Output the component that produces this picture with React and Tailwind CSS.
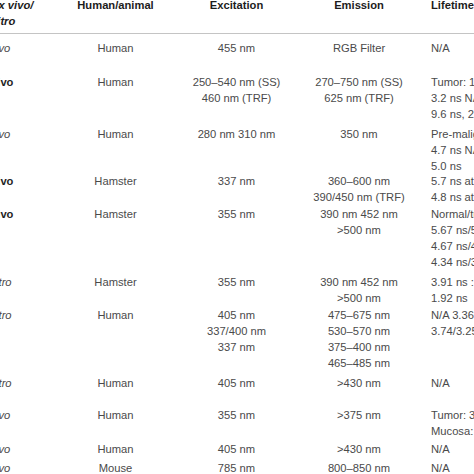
import React from "react";

// columns: study type | species | excitation | emission | lifetime
const cols = "grid grid-cols-[80px_115px_127px_118px_1fr]";

const rows = [
  { h: "h-[34px]", c1: "In vivo", s1: "italic", animal: "Human", exc: ["455 nm"], em: ["RGB Filter"], life: ["N/A"] },
  {
    h: "h-[52px]",
    c1: "In vivo",
    s1: "font-bold text-[#1f1f1f]",
    animal: "Human",
    exc: ["250–540 nm (SS)", "460 nm (TRF)"],
    em: ["270–750 nm (SS)", "625 nm (TRF)"],
    life: ["Tumor: 1.8 ns", "3.2 ns NADH", "9.6 ns, 2.4 ns"],
  },
  {
    h: "h-[47px]",
    c1: "In vivo",
    s1: "italic",
    animal: "Human",
    exc: ["280 nm 310 nm"],
    em: ["350 nm"],
    life: ["Pre-malignant", "4.7 ns NADH", "5.0 ns"],
  },
  {
    h: "h-[33px]",
    c1: "In vivo",
    s1: "font-bold text-[#1f1f1f]",
    animal: "Hamster",
    exc: ["337 nm"],
    em: ["360–600 nm", "390/450 nm (TRF)"],
    life: ["5.7 ns at 390 nm", "4.8 ns at 450 nm"],
  },
  {
    h: "h-[68px]",
    c1: "In vivo",
    s1: "font-bold text-[#1f1f1f]",
    animal: "Hamster",
    exc: ["355 nm"],
    em: ["390 nm 452 nm", ">500 nm"],
    life: ["Normal/tumor", "5.67 ns/5.1 ns", "4.67 ns/4.2 ns", "4.34 ns/3.9 ns"],
  },
  {
    h: "h-[33px]",
    c1: "In vitro",
    s1: "italic",
    animal: "Hamster",
    exc: ["355 nm"],
    em: ["390 nm 452 nm", ">500 nm"],
    life: ["3.91 ns : 2.1 ns", "1.92 ns"],
  },
  {
    h: "h-[68px]",
    c1: "In vitro",
    s1: "italic",
    animal: "Human",
    exc: ["405 nm", "337/400 nm", "337 nm"],
    em: ["475–675 nm", "530–570 nm", "375–400 nm", "465–485 nm"],
    life: ["N/A 3.36 ns", "3.74/3.25 ns"],
  },
  { h: "h-[32px]", c1: "In vitro", s1: "italic", animal: "Human", exc: ["405 nm"], em: [">430 nm"], life: ["N/A"] },
  {
    h: "h-[34px]",
    c1: "In vivo",
    s1: "italic",
    animal: "Human",
    exc: ["355 nm"],
    em: [">375 nm"],
    life: ["Tumor: 3.1 ns", "Mucosa: 4.2 ns"],
  },
  { h: "h-[19px]", c1: "In vivo", s1: "italic", animal: "Human", exc: ["405 nm"], em: [">430 nm"], life: ["N/A"] },
  { h: "h-[24px]", c1: "In vivo", s1: "italic", animal: "Mouse", exc: ["785 nm"], em: ["800–850 nm"], life: ["N/A"] },
];

const Lines = ({ items }) =>
  items.map((t, i) => (
    <div key={i} className="whitespace-nowrap">
      {t}
    </div>
  ));

export default function App() {
  return (
    <div className="w-[474px] h-[474px] overflow-hidden bg-white font-['Liberation_Sans',Arial,sans-serif] text-[11.2px] leading-[16px] text-[#4a4a4a]">
      <div className="w-[600px] -ml-[22px] -mt-[3px]">
        {/* header */}
        <div className={`${cols} pb-[4px] border-b border-[#c4c4c4] font-bold text-[#1c1c1c]`}>
          <div className="italic whitespace-nowrap">
            In/Ex vivo/
            <br />
            In vitro
          </div>
          <div className="text-center">Human/animal</div>
          <div className="text-center">Excitation</div>
          <div className="text-center">Emission</div>
          <div className="pl-[13px] whitespace-nowrap">Lifetime</div>
        </div>

        <div className="pt-[6px]">
          {rows.map((r, i) => (
            <div key={i} className={`${cols} ${r.h}`}>
              <div className={`whitespace-nowrap ${r.s1}`}>{r.c1}</div>
              <div className="text-center">{r.animal}</div>
              <div className="text-center">
                <Lines items={r.exc} />
              </div>
              <div className="text-center">
                <Lines items={r.em} />
              </div>
              <div className="pl-[13px]">
                <Lines items={r.life} />
              </div>
            </div>
          ))}
        </div>
      </div>
    </div>
  );
}
